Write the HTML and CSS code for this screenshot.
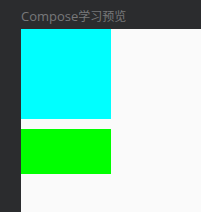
FILE: index.html
```html
<!DOCTYPE html>
<html lang="en">
<head>
  <meta charset="UTF-8">
  <title>Compose学习预览</title>
  <link rel="stylesheet" href="styles.css">
</head>
<body>
  <div class="window">
    <div class="title">Compose<span class="title-cjk">学习预览</span></div>
    <div class="preview">
      <div class="box box-cyan"></div>
      <div class="box box-green"></div>
    </div>
  </div>
</body>
</html>
```

FILE: styles.css
```css
html, body {
  margin: 0;
  height: 100%;
  background-color: #2b2c2e;
}
.window {
  display: flex;
  flex-direction: column;
  height: 100%;
  padding-left: 21px;
  box-sizing: border-box;
}
.title {
  height: 29px;
  line-height: 32px;
  font-family: "Open Sans", "Noto Sans CJK SC", sans-serif;
  font-size: 13px;
  color: #77787a;
  white-space: nowrap;
  overflow: hidden;
}
.title-cjk {
  font-size: 12px;
}
.preview {
  flex: 1;
  background-color: #fafafa;
  display: flex;
  flex-direction: column;
  gap: 10px;
}
.box {
  width: 90px;
}
.box-cyan {
  height: 90px;
  background-color: #00ffff;
}
.box-green {
  height: 45px;
  background-color: #00ff00;
}
```
